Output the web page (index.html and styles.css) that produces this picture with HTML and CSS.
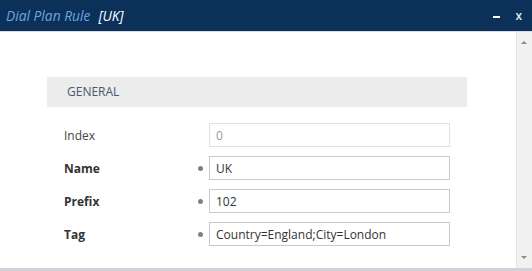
FILE: index.html
```html
<!DOCTYPE html>
<html lang="en">

<head>
    <meta charset="UTF-8">
    <title>Dial Plan Rule</title>
    <link rel="stylesheet" href="styles.css">
</head>

<body>
    <div class="dialog">
        <div class="title-bar">
            <span class="title">Dial Plan Rule</span>
            <span class="title-key">[UK]</span>
            <div class="title-buttons">
                <span class="btn-min"></span>
                <span class="btn-close">x</span>
            </div>
        </div>

        <div class="body">
            <div class="content">
                <div class="section">GENERAL</div>

                <div class="form">
                    <label class="field-label">Index</label>
                    <span></span>
                    <input type="text" class="field readonly" value="0" readonly>

                    <label class="field-label bold">Name</label>
                    <span class="dot"></span>
                    <input type="text" class="field" value="UK">

                    <label class="field-label bold">Prefix</label>
                    <span class="dot"></span>
                    <input type="text" class="field" value="102">

                    <label class="field-label bold">Tag</label>
                    <span class="dot"></span>
                    <input type="text" class="field" value="Country=England;City=London">
                </div>
            </div>

            <div class="scrollbar">
                <span class="arrow-up"></span>
                <span class="arrow-down"></span>
            </div>
        </div>

        <div class="bottom-line"></div>
    </div>
</body>

</html>
```

FILE: styles.css
```css
body {
    margin: 0;
    padding: 0;
    font-family: "Open Sans", Arial, sans-serif;
    background-color: #fff;
}

.dialog {
    width: 532px;
    height: 271px;
    display: flex;
    flex-direction: column;
}

.title-bar {
    height: 31px;
    background-color: #0b3159;
    display: flex;
    align-items: center;
    padding-left: 6px;
    font-style: italic;
    font-size: 13.8px;
}

.title {
    color: #6ea3df;
}

.title-key {
    color: #fff;
    margin-left: 8px;
    font-weight: 500;
}

.title-buttons {
    margin-left: auto;
    display: flex;
    align-items: center;
}

.btn-min {
    width: 7px;
    height: 2px;
    background-color: #fff;
    margin-top: 3px;
}

.btn-close {
    color: #dfe9f5;
    font-style: normal;
    font-size: 12px;
    font-weight: 600;
    margin-left: 15px;
    margin-right: 10px;
    margin-top: -1px;
}

.body {
    flex: 1;
    display: flex;
    border-top: 1px solid #d9dde2;
}

.content {
    flex: 1;
    padding-top: 45px;
    padding-left: 47px;
}

.section {
    width: 400px;
    height: 30px;
    line-height: 30px;
    padding-left: 20px;
    background-color: #ececec;
    color: #4b5868;
    font-size: 12px;
}

.form {
    display: grid;
    grid-template-columns: 134px 11px 241px;
    row-gap: 9px;
    margin-top: 16px;
    margin-left: 17px;
    align-items: center;
}

.field-label {
    font-size: 12px;
    color: #444;
}

.field-label.bold {
    font-weight: 700;
    color: #333;
}

.dot {
    width: 5px;
    height: 5px;
    border-radius: 50%;
    background-color: #7a828d;
}

.field {
    box-sizing: border-box;
    width: 241px;
    height: 24px;
    border: 1px solid #c7cbd1;
    padding: 0 6px;
    font-family: "Open Sans", Arial, sans-serif;
    font-size: 12px;
    color: #333;
    outline: none;
}

.field.readonly {
    border-color: #dfe1e4;
    color: #999;
}

.scrollbar {
    width: 15px;
    background-color: #f1f1f1;
    border-left: 1px solid #e2e2e2;
    position: relative;
}

.arrow-up,
.arrow-down {
    position: absolute;
    left: 4px;
    width: 0;
    height: 0;
    border-left: 3px solid transparent;
    border-right: 3px solid transparent;
}

.arrow-up {
    top: 9px;
    border-bottom: 3px solid #8a8a8a;
}

.arrow-down {
    bottom: 9px;
    border-top: 3px solid #8a8a8a;
}

.bottom-line {
    height: 3px;
    background-color: #cfd3d8;
}
```
